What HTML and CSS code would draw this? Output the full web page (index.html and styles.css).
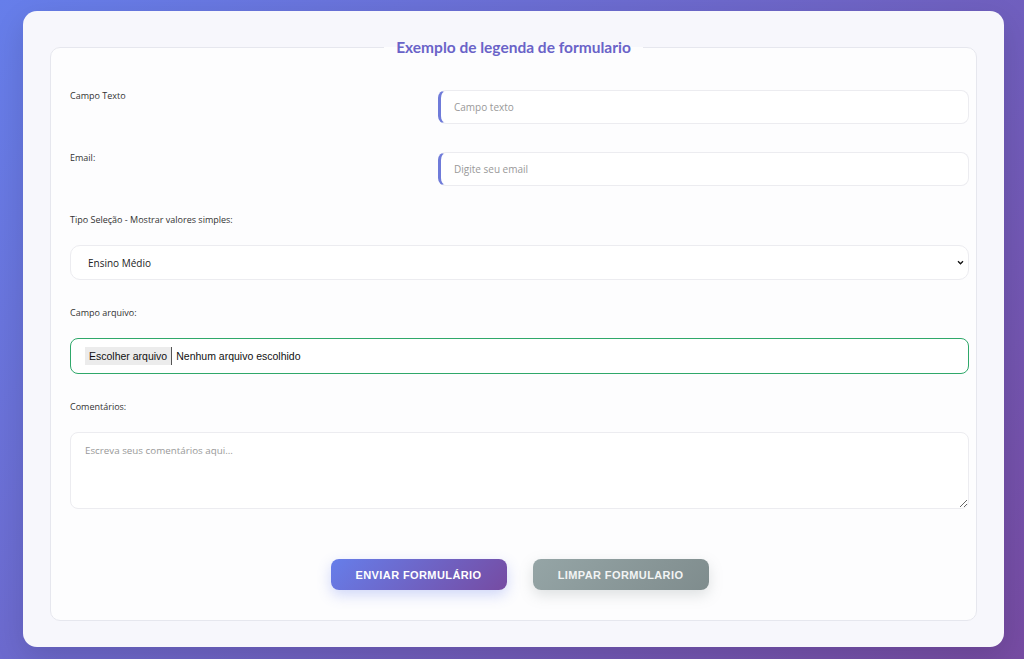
FILE: index.html
```html
<!DOCTYPE html>
<html lang="pt-BR">
<head>
<meta charset="utf-8">
<title>Formulário</title>
<link rel="stylesheet" href="styles.css">
</head>
<body>
<div class="card">
  <form class="form">
    <fieldset class="fs">
      <legend class="legend">Exemplo de legenda de formulario</legend>
      <div class="fields">
        <div class="row">
          <label class="lbl" for="t">Campo Texto</label>
          <input class="inp accent" id="t" type="text" placeholder="Campo texto">
        </div>

        <div class="row">
          <label class="lbl" for="e">Email:</label>
          <input class="inp accent" id="e" type="email" placeholder="Digite seu email">
        </div>

        <div class="group">
          <label class="lbl lbl-block" for="s">Tipo Seleção - Mostrar valores simples:</label>
          <select class="sel" id="s">
            <option>Ensino Médio</option>
          </select>
        </div>

        <div class="group">
          <label class="lbl lbl-block">Campo arquivo:</label>
          <div class="file">
            <span class="file-btn">Escolher arquivo</span>
            <span class="file-name">Nenhum arquivo escolhido</span>
          </div>
        </div>

        <div class="group">
          <label class="lbl lbl-block" for="c">Comentários:</label>
          <textarea class="ta" id="c" placeholder="Escreva seus comentários aqui..."></textarea>
        </div>

        <div class="actions">
          <button type="button" class="btn btn-primary">Enviar Formulário</button>
          <button type="button" class="btn btn-gray">Limpar Formulario</button>
        </div>
      </div>
    </fieldset>
  </form>
</div>
</body>
</html>
```

FILE: styles.css
```css
html, body {
  margin: 0;
  padding: 0;
}
body {
  width: 1024px;
  height: 659px;
  background: linear-gradient(135deg, #667eea 0%, #764ba2 100%);
  font-family: "Open Sans", "Noto Sans", sans-serif;
  overflow: hidden;
  box-sizing: border-box;
  padding: 11px 20px 12px 23px;
}
.card {
  width: 981px;
  height: 636px;
  box-sizing: border-box;
  background: #f7f7fc;
  border-radius: 14px;
  padding: 26px 27px 26px 27px;
  box-shadow: 0 10px 30px rgba(0,0,0,0.12);
}
.form {
  margin: 0;
  height: 100%;
}
.fs {
  margin: 0;
  height: 100%;
  box-sizing: border-box;
  border: 1.5px solid #e6e7ee;
  border-radius: 10px;
  background: #fdfdfe;
  padding: 33px 13px 0 13px;
  min-width: 0;
}
.fields {
  margin: 0 -6px 0 6px;
}
.legend {
  margin: 0 auto;
  padding: 0 12px;
  font-family: "Lato", "Open Sans", sans-serif;
  font-weight: 700;
  font-size: 15.5px;
  line-height: 20px;
  color: #6a63c8;
}
.row {
  display: grid;
  grid-template-columns: 360px 1fr;
  column-gap: 8px;
  margin-bottom: 28px;
}
.lbl {
  display: block;
  font-size: 9px;
  line-height: 12px;
  color: #333;
  font-weight: 500;
}
.lbl-block {
  margin-bottom: 19px;
}
.group {
  margin-bottom: 27px;
}
.inp {
  box-sizing: border-box;
  width: 100%;
  height: 34px;
  border: 1px solid #ececf0;
  border-radius: 8px;
  background: #fff;
  padding: 0 15px 0 13px;
  font-family: inherit;
  font-size: 10px;
  color: #333;
  outline: none;
}
.accent {
  border-left: 3px solid #6f7bd9;
}
.inp::placeholder, .ta::placeholder {
  color: #999;
}
.sel {
  box-sizing: border-box;
  width: 100%;
  height: 35px;
  border: 1px solid #ececf0;
  border-radius: 10px;
  background-color: #fff;
  background-image: url("data:image/svg+xml,%3Csvg xmlns='http://www.w3.org/2000/svg' width='8' height='6' viewBox='0 0 8 6'%3E%3Cpath d='M1 1.5 L4 4.5 L7 1.5' fill='none' stroke='%23111' stroke-width='1.6'/%3E%3C/svg%3E");
  background-repeat: no-repeat;
  background-position: right 4px center;
  background-size: 7px 5px;
  -webkit-appearance: none;
  appearance: none;
  padding: 0 14px 0 17px;
  font-family: inherit;
  font-size: 10px;
  color: #222;
  outline: none;
}
.file {
  box-sizing: border-box;
  height: 36px;
  border: 1.5px solid #2fa86a;
  border-radius: 8px;
  background: #fff;
  display: flex;
  align-items: center;
  padding-left: 14px;
  font-family: "Liberation Sans", Arial, sans-serif;
  font-size: 10.5px;
  color: #111;
}
.file-btn {
  background: #ececec;
  padding: 2px 4px;
  border-right: 1px solid #555;
  margin-right: 4px;
  line-height: 14px;
}
.ta {
  display: block;
  box-sizing: border-box;
  width: 100%;
  height: 77px;
  border: 1px solid #ececf0;
  border-radius: 8px;
  background: #fff;
  padding: 11px 14px;
  font-family: inherit;
  font-size: 9.8px;
  color: #333;
  outline: none;
  resize: vertical;
}
.actions {
  display: flex;
  justify-content: center;
  gap: 26px;
  margin-top: 50px;
}
.btn {
  width: 176px;
  height: 31px;
  border: none;
  border-radius: 8px;
  font-family: "Liberation Sans", Arial, sans-serif;
  font-weight: 700;
  font-size: 11px;
  letter-spacing: 0.4px;
  text-transform: uppercase;
  color: #fff;
  cursor: pointer;
}
.btn-primary {
  background: linear-gradient(135deg, #667eea 0%, #764ba2 100%);
  box-shadow: 0 5px 14px rgba(102,126,234,0.3);
}
.btn-gray {
  background: linear-gradient(135deg, #95a5a6 0%, #7f8c8d 100%);
  color: #f2f4f4;
  box-shadow: 0 5px 14px rgba(127,140,141,0.25);
}
```
